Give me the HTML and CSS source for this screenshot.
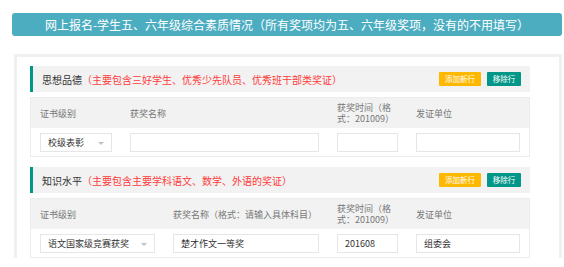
FILE: index.html
```html
<!DOCTYPE html>
<html lang="zh-CN">
<head>
    <meta charset="UTF-8">
    <meta name="viewport" content="width=device-width, initial-scale=1.0">
    <title>网上报名-学生五、六年级综合素质情况</title>
    <link rel="stylesheet" href="styles.css">
</head>
<body>

    <!-- Page title bar -->
    <div class="title-bar">网上报名-学生五、六年级综合素质情况（所有奖项均为五、六年级奖项，没有的不用填写）</div>

    <div class="panel">
        <!-- Section 1 -->
        <div class="section-head">
            <div class="section-title">思想品德<span class="hint">（主要包含三好学生、优秀少先队员、优秀班干部类奖证）</span></div>
            <button class="btn btn-warm">添加新行</button>
            <button class="btn btn-teal">移除行</button>
        </div>
        <div class="table">
            <div class="row row-head cols-a">
                <div class="cell">证书级别</div>
                <div class="cell">获奖名称</div>
                <div class="cell">获奖时间（格式：201009）</div>
                <div class="cell">发证单位</div>
            </div>
            <div class="row row-body cols-a">
                <div class="cell"><div class="select">校级表彰<span class="arrow"></span></div></div>
                <div class="cell"><div class="input"></div></div>
                <div class="cell"><div class="input"></div></div>
                <div class="cell"><div class="input"></div></div>
            </div>
        </div>

        <!-- Section 2 -->
        <div class="section-head">
            <div class="section-title">知识水平<span class="hint">（主要包含主要学科语文、数学、外语的奖证）</span></div>
            <button class="btn btn-warm">添加新行</button>
            <button class="btn btn-teal">移除行</button>
        </div>
        <div class="table">
            <div class="row row-head cols-b">
                <div class="cell">证书级别</div>
                <div class="cell">获奖名称（格式：请输入具体科目）</div>
                <div class="cell">获奖时间（格式：201009）</div>
                <div class="cell">发证单位</div>
            </div>
            <div class="row row-body cols-b">
                <div class="cell"><div class="select">语文国家级竞赛获奖<span class="arrow"></span></div></div>
                <div class="cell"><div class="input">楚才作文一等奖</div></div>
                <div class="cell"><div class="input">201608</div></div>
                <div class="cell"><div class="input">组委会</div></div>
            </div>
        </div>
    </div>

</body>
</html>
```

FILE: styles.css
```css
body, html {
    margin: 0;
    padding: 0;
    background: #fff;
    font-family: "Noto Sans CJK SC", "Noto Sans", sans-serif;
    color: #333;
}

body {
    padding: 13px 0 0 12px;
    overflow: hidden;
}

.title-bar {
    width: 550px;
    height: 23px;
    line-height: 23px;
    background-color: #4cadc1;
    border-radius: 3px;
    color: #fff;
    font-size: 12px;
    text-align: center;
}

.panel {
    width: 548px;
    margin: 18px 0 0 2px;
    border: 3px solid #f0f0f0;
    border-bottom: none;
    padding: 9px 29px 0 13px;
    box-sizing: border-box;
}

.section-head {
    display: flex;
    align-items: center;
    height: 26px;
    width: 500px;
    background-color: #f2f2f2;
    border-left: 3px solid #009688;
    box-sizing: border-box;
    padding: 0 9px 0 9px;
}

.section-title {
    flex: 1;
    font-size: 10px;
    color: #333;
}

.hint {
    color: #ff3b3b;
}

.btn {
    border: none;
    padding: 0;
    height: 14px;
    line-height: 14px;
    color: #fff;
    font-family: inherit;
    font-size: 7.5px;
    border-radius: 1px;
}

.btn-warm {
    width: 42px;
    background-color: #ffb800;
}

.btn-teal {
    width: 34px;
    margin-left: 6px;
    background-color: #009688;
}

.table {
    width: 500px;
    margin: 5px 0 10px 0;
    border: 1px solid #ececec;
    box-sizing: border-box;
}

.row {
    display: grid;
    align-items: center;
}

.cols-a {
    grid-template-columns: 90px 207px 79px 1fr;
}

.cols-b {
    grid-template-columns: 133px 164px 79px 1fr;
}

.row-head {
    height: 30px;
    background-color: #f2f2f2;
    font-size: 9px;
    line-height: 11px;
    color: #777;
}

.row-body {
    height: 28px;
    background-color: #fff;
}

.cell {
    padding: 0 9px 0 9px;
}

.select, .input {
    position: relative;
    height: 19px;
    line-height: 17px;
    border: 1px solid #e6e6e6;
    box-sizing: border-box;
    padding: 0 7px;
    font-size: 9px;
    color: #333;
    background: #fff;
}

.arrow {
    position: absolute;
    right: 7px;
    top: 8px;
    border-left: 3px solid transparent;
    border-right: 3px solid transparent;
    border-top: 3px solid #c2c2c2;
}
```
